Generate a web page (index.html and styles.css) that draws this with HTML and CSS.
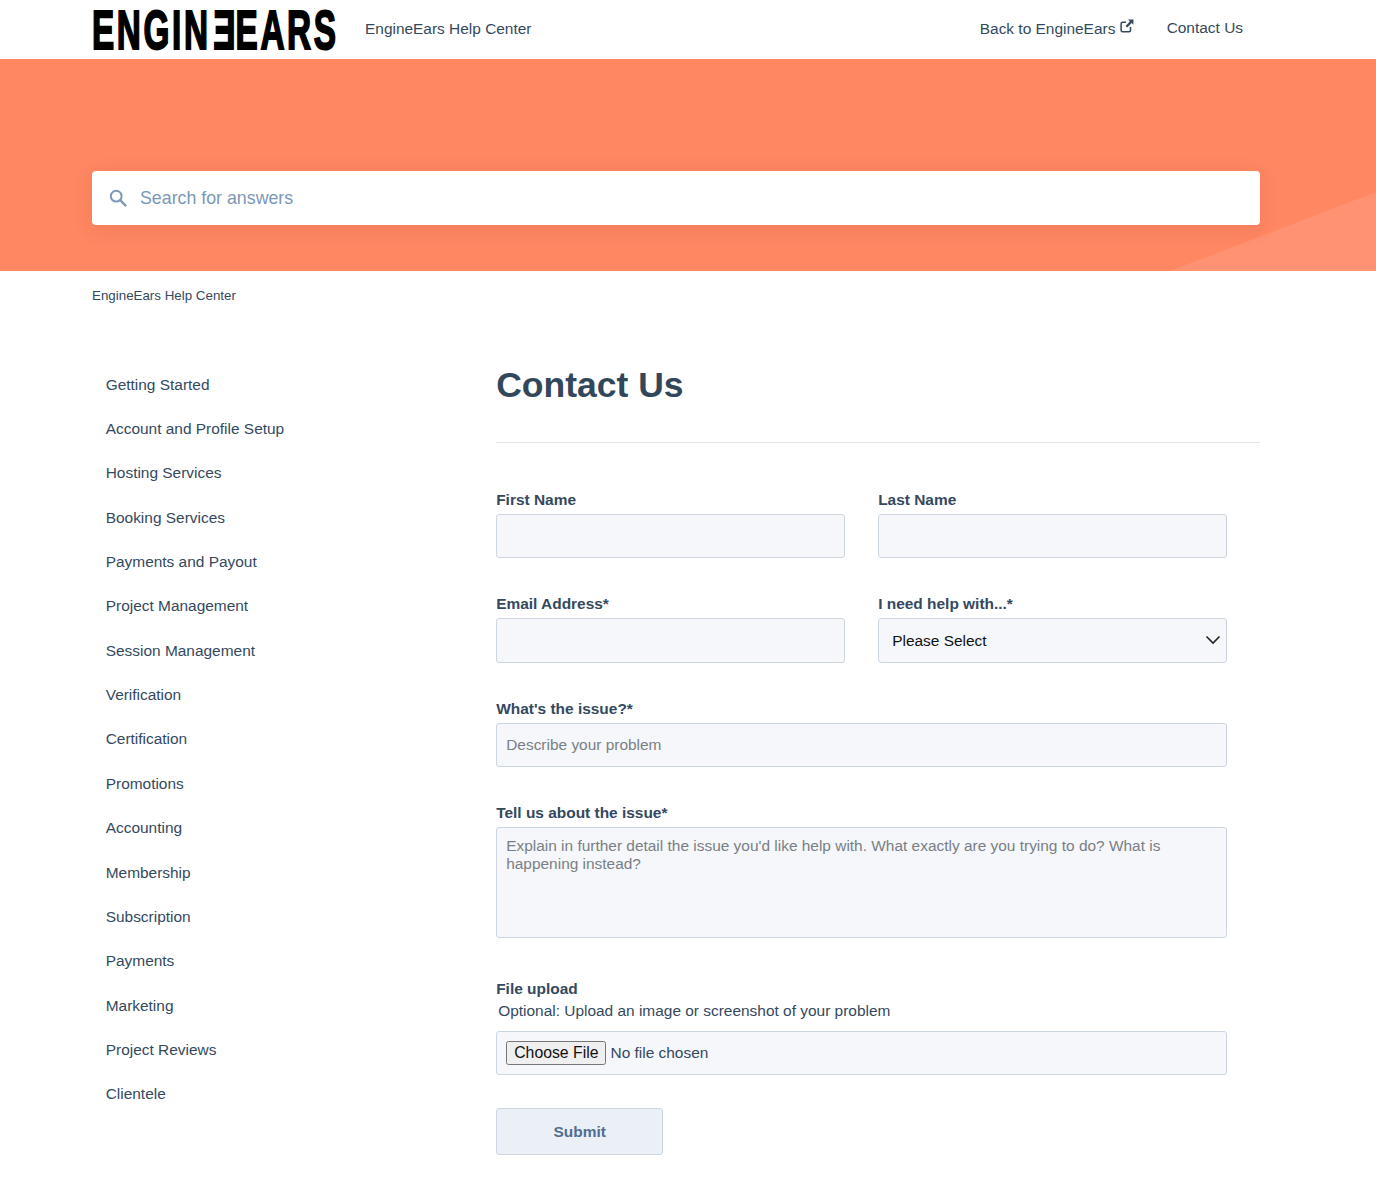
FILE: index.html
```html
<!DOCTYPE html>
<html lang="en">
<head>
    <meta charset="UTF-8">
    <meta name="viewport" content="width=device-width, initial-scale=1.0">
    <title>Contact Us | EngineEars Help Center</title>
    <link rel="stylesheet" href="styles.css">
</head>
<body>

    <header class="site-header">
        <div class="container header-row">
            <a class="logo" href="#"><span class="logo-text">ENGIN<span class="logo-flip">E</span>EARS</span></a>
            <a class="site-name" href="#">EngineEars Help Center</a>
            <nav class="header-nav">
                <a href="#">Back to EngineEars
                    <svg class="external-icon" viewBox="0 0 14 14" width="14" height="14" aria-hidden="true">
                        <path d="M10.5 8v3.2c0 .9-.6 1.5-1.5 1.5H2.6c-.9 0-1.5-.6-1.5-1.5V4.8c0-.9.6-1.5 1.5-1.5H6" fill="none" stroke="currentColor" stroke-width="1.5"/>
                        <path d="M8.2 .6h5.2v5.2l-1.8-1.7-4.4 4.5-1.7-1.7 4.4-4.5z" fill="currentColor"/>
                    </svg>
                </a>
                <a href="#">Contact Us</a>
            </nav>
        </div>
    </header>

    <section class="hero">
        <svg class="hero-shape" viewBox="0 0 206 79" width="206" height="79" aria-hidden="true">
            <polygon points="0,79 206,0 206,79"/>
        </svg>
        <div class="container">
            <form class="search-box">
                <svg class="search-icon" viewBox="0 0 18 18" width="18" height="18" aria-hidden="true">
                    <circle cx="7.2" cy="7.2" r="5.4" fill="none" stroke="currentColor" stroke-width="2"/>
                    <path d="M11.2 11.2l5.3 5.3" stroke="currentColor" stroke-width="2.4" stroke-linecap="round"/>
                </svg>
                <input class="search-input" type="text" placeholder="Search for answers">
            </form>
        </div>
    </section>

    <div class="container">
        <p class="breadcrumb"><a href="#">EngineEars Help Center</a></p>

        <div class="page-layout">
            <aside class="sidebar">
                <ul class="category-list">
                    <li><a href="#">Getting Started</a></li>
                    <li><a href="#">Account and Profile Setup</a></li>
                    <li><a href="#">Hosting Services</a></li>
                    <li><a href="#">Booking Services</a></li>
                    <li><a href="#">Payments and Payout</a></li>
                    <li><a href="#">Project Management</a></li>
                    <li><a href="#">Session Management</a></li>
                    <li><a href="#">Verification</a></li>
                    <li><a href="#">Certification</a></li>
                    <li><a href="#">Promotions</a></li>
                    <li><a href="#">Accounting</a></li>
                    <li><a href="#">Membership</a></li>
                    <li><a href="#">Subscription</a></li>
                    <li><a href="#">Payments</a></li>
                    <li><a href="#">Marketing</a></li>
                    <li><a href="#">Project Reviews</a></li>
                    <li><a href="#">Clientele</a></li>
                </ul>
            </aside>

            <main class="content">
                <h1 class="page-title">Contact Us</h1>

                <form class="contact-form">
                    <div class="form-row">
                        <div class="field">
                            <label for="firstName">First Name</label>
                            <input id="firstName" type="text">
                        </div>
                        <div class="field">
                            <label for="lastName">Last Name</label>
                            <input id="lastName" type="text">
                        </div>
                    </div>

                    <div class="form-row">
                        <div class="field">
                            <label for="email">Email Address*</label>
                            <input id="email" type="email">
                        </div>
                        <div class="field">
                            <label for="topic">I need help with...*</label>
                            <div class="select-wrap">
                                <select id="topic">
                                    <option>Please Select</option>
                                </select>
                                <svg class="select-arrow" viewBox="0 0 16 10" width="16" height="10" aria-hidden="true">
                                    <path d="M1.5 1.5l6.5 6.5 6.5-6.5" fill="none" stroke="currentColor" stroke-width="1.6"/>
                                </svg>
                            </div>
                        </div>
                    </div>

                    <div class="field">
                        <label for="issue">What's the issue?*</label>
                        <input id="issue" type="text" placeholder="Describe your problem">
                    </div>

                    <div class="field field-long">
                        <label for="details">Tell us about the issue*</label>
                        <textarea id="details" placeholder="Explain in further detail the issue you'd like help with. What exactly are you trying to do? What is happening instead?"></textarea>
                    </div>

                    <div class="field field-upload">
                        <label for="upload">File upload</label>
                        <p class="field-hint">Optional: Upload an image or screenshot of your problem</p>
                        <div class="file-box">
                            <input id="upload" type="file">
                        </div>
                    </div>

                    <button class="submit-btn" type="submit">Submit</button>
                </form>
            </main>
        </div>
    </div>

</body>
</html>
```

FILE: styles.css
```css
/* styles.css */
* {
    box-sizing: border-box;
}

body {
    margin: 0;
    font-family: "Liberation Sans", Arial, sans-serif;
    font-size: 15.45px;
    color: #34495e;
    background-color: #fff;
}

a {
    color: inherit;
    text-decoration: none;
}

.container {
    width: 1168px;
    margin-left: 92px;
}

/* header */
.site-header {
    height: 59px;
}

.header-row {
    display: flex;
    align-items: center;
    height: 57px;
    padding-right: 16px;
}

.logo {
    display: block;
    flex: none;
    width: 245px;
    height: 44px;
    margin-right: 28px;
}

.logo-text {
    display: block;
    width: 420px;
    margin-top: 1.2px;
    font-size: 55px;
    font-weight: 700;
    line-height: 44px;
    letter-spacing: 4.4px;
    color: #000;
    white-space: nowrap;
    transform: scaleX(0.605);
    transform-origin: left center;
    -webkit-text-stroke: 2px #000;
}

.logo-flip {
    display: inline-block;
    transform: scaleX(-1);
}

.site-name {
    padding-top: 1px;
}

.header-nav {
    display: flex;
    gap: 33px;
    margin-left: auto;
    transform: translateX(-1px);
}

.external-icon {
    vertical-align: 1px;
}

/* hero */
.hero {
    position: relative;
    height: 212px;
    padding-top: 112px;
    background-color: #ff8762;
    overflow: hidden;
}

.hero-shape {
    position: absolute;
    right: 0;
    bottom: 0;
    fill: #ff9272;
}

.search-box {
    position: relative;
    display: flex;
    align-items: center;
    height: 54px;
    padding-left: 17px;
    background-color: #fff;
    border-radius: 4px;
    box-shadow: 0 4px 20px rgba(120, 60, 40, 0.12);
}

.search-icon {
    flex: none;
    margin-right: 13px;
    color: #7c98b6;
}

.search-input {
    flex: 1;
    height: 100%;
    padding: 0;
    border: 0;
    outline: 0;
    background: transparent;
    font-family: inherit;
    font-size: 17.8px;
    color: #34495e;
}

.search-input::placeholder {
    color: #7c98b6;
    opacity: 1;
}

/* breadcrumb */
.breadcrumb {
    margin: 0;
    padding-top: 16px;
    font-size: 13.35px;
    line-height: 17px;
}

/* two columns */
.page-layout {
    display: flex;
    padding-top: 59px;
}

.sidebar {
    flex: none;
    width: 404.2px;
}

.category-list {
    margin: 0;
    padding: 0 0 0 13.7px;
    list-style: none;
}

.category-list li {
    height: 44.37px;
    padding-top: 12.6px;
    line-height: 18px;
}

.content {
    flex: 1;
}

.page-title {
    margin: 0;
    padding-bottom: 35px;
    font-size: 35.5px;
    line-height: 44px;
    font-weight: 700;
    color: #33475b;
    border-bottom: 1px solid #dfe3eb;
}

/* form */
.contact-form {
    display: flex;
    flex-direction: column;
    width: 730.8px;
    padding-top: 48px;
}

.form-row {
    display: grid;
    grid-template-columns: 349px 348.8px;
    column-gap: 33px;
}

.field {
    height: 104.3px;
}

.field label {
    display: block;
    height: 23px;
    font-size: 15.45px;
    font-weight: 700;
    line-height: 18px;
    color: #34495e;
}

.field input[type="text"],
.field input[type="email"],
.field select,
.field textarea,
.file-box {
    display: block;
    width: 100%;
    height: 44.4px;
    padding: 0 9px;
    border: 1px solid #cbd6e2;
    border-radius: 3px;
    outline: 0;
    background-color: #f5f7fa;
    font-family: inherit;
    font-size: 15.45px;
    color: #33475b;
}

.field ::placeholder {
    color: #7a7f85;
    opacity: 1;
}

.field textarea {
    height: 111.5px;
    padding-top: 9px;
    resize: none;
    line-height: 18px;
}

.field-long {
    height: 176px;
}

.select-wrap {
    position: relative;
}

.field select {
    padding-left: 13px;
    appearance: none;
    color: #111;
}

.select-arrow {
    position: absolute;
    top: 17px;
    right: 6px;
    color: #222;
}

.field-upload {
    height: auto;
}

.field-upload label {
    height: 18px;
}

.field-hint {
    margin: 0;
    padding: 4px 0 0 2px;
    line-height: 18px;
}

.file-box {
    display: flex;
    align-items: center;
    margin-top: 11px;
}

.file-box input {
    font-family: inherit;
    font-size: 15.45px;
    color: #34495e;
}

.file-box input::file-selector-button {
    margin-right: 4px;
    font-family: inherit;
    font-size: 15.8px;
    color: #111;
}

.submit-btn {
    width: 167px;
    height: 47px;
    margin-top: 33px;
    border: 1px solid #cbd6e2;
    border-radius: 3px;
    background-color: #eaf0f6;
    font-family: inherit;
    font-size: 15.45px;
    font-weight: 700;
    color: #506e91;
}
```
